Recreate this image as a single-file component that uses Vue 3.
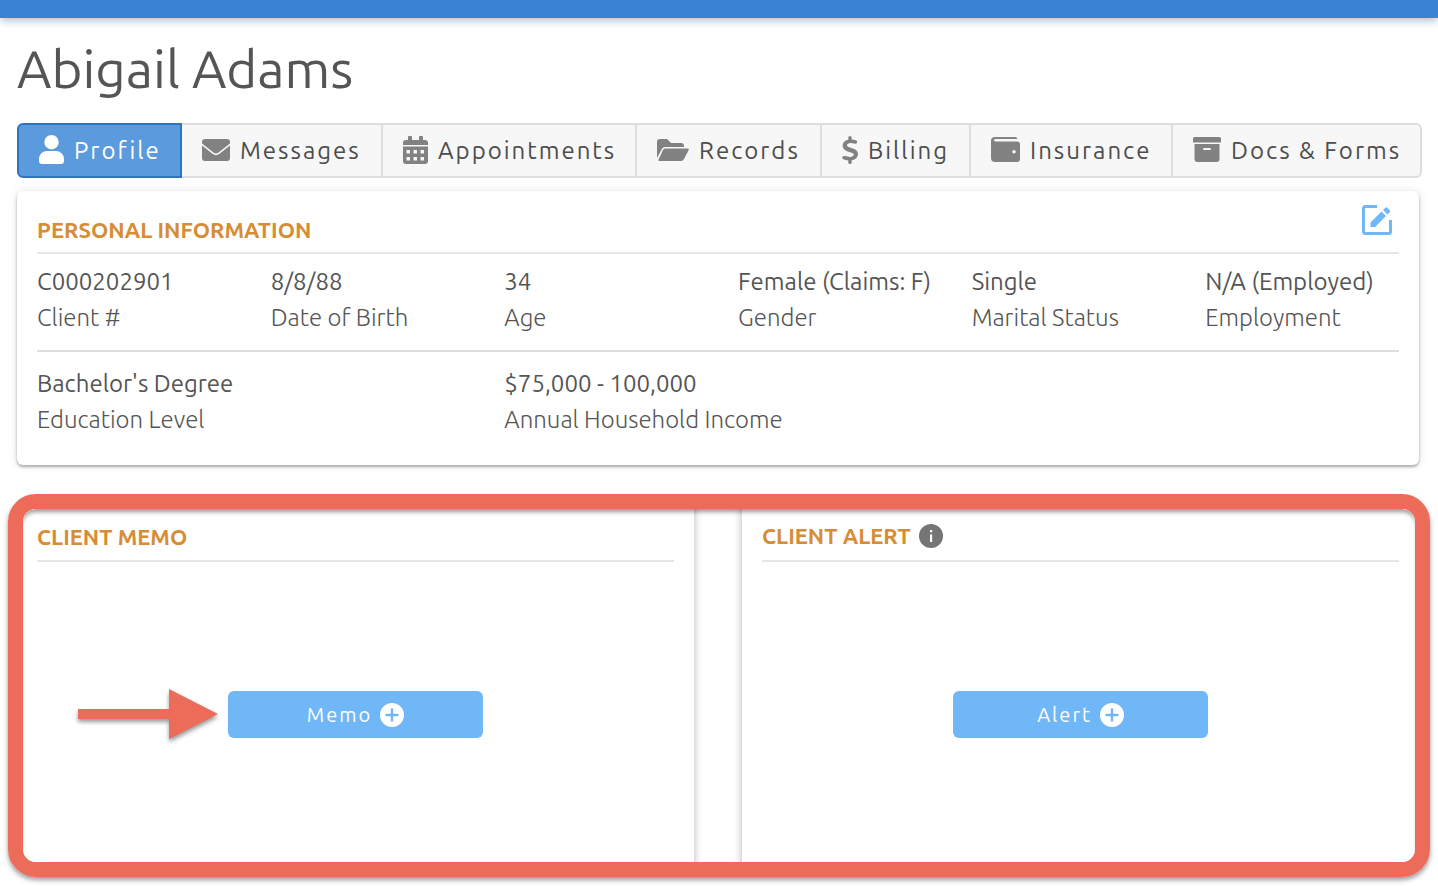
<template>
  <div class="page">
    <header class="topbar"></header>
    <main>
      <h1>{{ client }}</h1>

      <nav class="tabs">
        <button
          v-for="tab in tabs"
          :key="tab.name"
          type="button"
          class="tab"
          :class="{ active: tab.name === current }"
          @click="current = tab.name"
        >
          <svg :width="tab.w" :height="tab.h" :viewBox="`0 0 ${tab.w} ${tab.h}`" aria-hidden="true">
            <path :d="tab.path" fill="currentColor" fill-rule="evenodd" />
          </svg>
          <span>{{ tab.name }}</span>
        </button>
      </nav>

      <section class="card">
        <div class="card-head">
          <h2>Personal Information</h2>
          <button type="button" class="edit" aria-label="Edit personal information">
            <svg width="32" height="32" viewBox="0 0 32 32">
              <path d="M16 2.500H4.500Q2.500 2.500 2.500 4.500V27.500Q2.500 29.500 4.500 29.500H27.500Q29.500 29.500 29.500 27.500V16" fill="none" stroke="currentColor" stroke-width="3" />
              <path d="M9.500 23V18.500L20.500 7.500L25 12L14 23ZM22 6L24.300 3.700Q25.300 2.800 26.300 3.700L28.800 6.200Q29.700 7.200 28.800 8.200L26.500 10.500Z" fill="currentColor" />
            </svg>
          </button>
        </div>
        <dl class="info">
          <div v-for="item in personal" :key="item.label">
            <dt>{{ item.label }}</dt>
            <dd>{{ item.value }}</dd>
          </div>
        </dl>
        <dl class="info wide">
          <div v-for="item in background" :key="item.label">
            <dt>{{ item.label }}</dt>
            <dd>{{ item.value }}</dd>
          </div>
        </dl>
      </section>
    </main>

    <div class="highlight">
      <section class="panel memo">
        <h2>Client Memo</h2>
        <div class="panel-body">
          <div class="action">
            <svg class="arrow" width="140" height="50" viewBox="0 0 140 50" aria-hidden="true">
              <path d="M0 20H91V0L140 25L91 50V30H0Z" fill="#ec6b59" />
            </svg>
            <button type="button" class="add">
              Memo
              <svg width="24" height="24" viewBox="0 0 24 24" aria-hidden="true">
                <circle cx="12" cy="12" r="12" fill="#fff" />
                <path d="M12 6.500V17.500M6.500 12H17.500" stroke="#6fb7f7" stroke-width="2.400" stroke-linecap="round" />
              </svg>
            </button>
          </div>
        </div>
      </section>
      <section class="panel alert">
        <h2>
          Client Alert
          <svg width="24" height="24" viewBox="0 0 24 24" aria-hidden="true">
            <circle cx="12" cy="12" r="12" fill="#757575" />
            <path d="M11 6H13.200V8.300H11ZM11 10.500H13.200V18H11Z" fill="#fff" />
          </svg>
        </h2>
        <div class="panel-body">
          <div class="action">
            <button type="button" class="add">
              Alert
              <svg width="24" height="24" viewBox="0 0 24 24" aria-hidden="true">
                <circle cx="12" cy="12" r="12" fill="#fff" />
                <path d="M12 6.500V17.500M6.500 12H17.500" stroke="#6fb7f7" stroke-width="2.400" stroke-linecap="round" />
              </svg>
            </button>
          </div>
        </div>
      </section>
    </div>
  </div>
</template>

<script setup>
import { ref } from 'vue'

const client = 'Abigail Adams'
const current = ref('Profile')

const tabs = [
  {
    name: 'Profile', w: 25, h: 29,
    path: 'M12.500 0A7.200 7.200 0 1 1 12.500 14.400A7.200 7.200 0 1 1 12.500 0ZM8 16H17A8 8 0 0 1 25 24V26Q25 29 22 29H3Q0 29 0 26V24A8 8 0 0 1 8 16Z'
  },
  {
    name: 'Messages', w: 28, h: 22,
    path: 'M3 0H25Q28 0 28 3V4.500L16.500 13.500Q14 15.500 11.500 13.500L0 4.500V3Q0 0 3 0ZM0 6.500L10.500 14.800Q14 17.500 17.500 14.800L28 6.500V19Q28 22 25 22H3Q0 22 0 19Z'
  },
  {
    name: 'Appointments', w: 25, h: 28,
    path: 'M3 4H5V1Q5 0 6 0H8Q9 0 9 1V4H16V1Q16 0 17 0H19Q20 0 20 1V4H22Q25 4 25 7V9H0V7Q0 4 3 4ZM0 10.500H25V25Q25 28 22 28H3Q0 28 0 25ZM3.500 14V17.500H7V14ZM10.500 14V17.500H14V14ZM17.500 14V17.500H21V14ZM3.500 21V24.500H7V21ZM10.500 21V24.500H14V21ZM17.500 21V24.500H21V21Z'
  },
  {
    name: 'Records', w: 32, h: 22,
    path: 'M0 19V3Q0 0 3 0H10L14 4H24Q27 4 27 7V8H8Q6 8 5 9.700ZM8.200 9.500H30.500Q32.500 9.500 31.600 11.200L27 20Q26 22 24 22H2.500Q0.800 22 1.600 20.400L6 11Q6.700 9.500 8.200 9.500Z'
  },
  {
    name: 'Billing', w: 16, h: 28,
    path: 'M6.300 1.500Q6.300 0 8 0Q9.700 0 9.700 1.500V3.400Q12 3.600 14 4.300Q15.600 5 15.100 6.600Q14.500 8.200 12.800 7.700Q8.500 6.500 6.300 7.600Q4.500 8.600 5.200 10Q5.900 11 9.500 11.900Q15.900 13.500 16 18Q16 23 9.700 24.300V26.500Q9.700 28 8 28Q6.300 28 6.300 26.500V24.400Q3.600 24.100 1.300 23.200Q-0.200 22.500 0.500 20.900Q1.200 19.500 2.800 20.100Q7.500 21.600 10.200 20.400Q12.400 19.400 11.700 17.900Q11.100 16.800 7.400 15.900Q0.700 14.300 0.600 9.700Q0.700 4.900 6.300 3.700Z'
  },
  {
    name: 'Insurance', w: 29, h: 25,
    path: 'M4 0H24Q26 0 26.500 2H5Q3 2 3 3.200Q3 4.500 5 4.500H26Q29 4.500 29 7.500V22Q29 25 26 25H4Q0 25 0 21V4Q0 0 4 0ZM23 13A1.800 1.800 0 1 0 23 16.600A1.800 1.800 0 1 0 23 13Z'
  },
  {
    name: 'Docs & Forms', w: 28, h: 25,
    path: 'M1.500 0H26.500Q28 0 28 1.500V5.500H0V1.500Q0 0 1.500 0ZM1.500 7H26.500V22Q26.500 25 23.500 25H4.500Q1.500 25 1.500 22ZM11 11Q10 11 10 12Q10 13 11 13H17Q18 13 18 12Q18 11 17 11Z'
  }
]

const personal = [
  { label: 'Client #', value: 'C000202901' },
  { label: 'Date of Birth', value: '8/8/88' },
  { label: 'Age', value: '34' },
  { label: 'Gender', value: 'Female (Claims: F)' },
  { label: 'Marital Status', value: 'Single' },
  { label: 'Employment', value: 'N/A (Employed)' }
]

const background = [
  { label: 'Education Level', value: "Bachelor's Degree" },
  { label: 'Annual Household Income', value: '$75,000 - 100,000' }
]
</script>

<style>
body {
  margin: 0;
  background: #fff;
}
</style>

<style scoped>
.page {
  font-family: Ubuntu, "Open Sans", "Noto Sans", sans-serif;
  color: #555;
}
.page * {
  box-sizing: border-box;
}
.topbar {
  height: 18px;
  background: #3883d4;
  box-shadow: 0 2px 10px rgba(0, 0, 0, 0.3);
}
main {
  padding: 21px 16px 0 17px;
}
h1 {
  margin: 0;
  font-size: 53px;
  font-weight: 400;
  line-height: 60px;
}
button {
  font-family: inherit;
  cursor: pointer;
}

.tabs {
  display: grid;
  grid-template-columns: 165fr 201fr 254fr 185fr 149fr 202fr 249fr;
  margin-top: 24px;
}
.tab {
  display: flex;
  align-items: center;
  gap: 10px;
  height: 55px;
  padding: 0 0 0 20px;
  border: solid #dedede;
  border-width: 2px 2px 2px 0;
  background: #f7f7f7;
  color: #828282;
  font-size: 24px;
  letter-spacing: 2px;
  white-space: nowrap;
}
.tab svg {
  flex: none;
  margin-bottom: 2px;
}
.tab span {
  color: #4d4d4d;
}
.tab:first-child {
  border-left-width: 2px;
  border-radius: 6px 0 0 6px;
}
.tab:last-child {
  border-radius: 0 6px 6px 0;
}
.tab.active {
  border-color: #2f75bd;
  background: #5b9add;
  color: #fff;
}
.tab.active span {
  color: #fff;
}

.card {
  margin: 13px 3px 0 0;
  padding: 13px 20px 27px;
  border-radius: 6px;
  background: #fff;
  box-shadow: 0 2px 3px rgba(0, 0, 0, 0.3), 0 0 10px rgba(0, 0, 0, 0.1);
}
.card-head {
  display: flex;
  align-items: flex-start;
  justify-content: space-between;
  height: 50px;
  border-bottom: 2px solid #e6e6e6;
}
h2 {
  margin: 0;
  color: #d68d35;
  font-size: 22px;
  font-weight: 700;
  line-height: 30px;
  text-transform: uppercase;
}
.card-head h2 {
  padding-top: 11px;
}
.edit {
  margin-right: 6px;
  padding: 0;
  border: 0;
  background: none;
  color: #6fb7f7;
}
.edit svg {
  display: block;
}
.info {
  display: grid;
  grid-template-columns: repeat(6, minmax(0, 1fr));
  column-gap: 40px;
  margin: 0;
  padding: 10px 0 14px;
  font-size: 24px;
  line-height: 36px;
  white-space: nowrap;
}
.info.wide {
  padding: 14px 0 0;
  border-top: 2px solid #dedede;
}
.info.wide > div {
  grid-column: span 2;
}
.info > div {
  display: flex;
  flex-direction: column-reverse;
}
dt {
  font-weight: 300;
}
dd {
  margin: 0;
}

.highlight {
  display: grid;
  grid-template-columns: 671fr 673fr;
  column-gap: 48px;
  position: relative;
  margin: 29px 8px 9px;
  border: 15px solid #ec6b59;
  border-radius: 28px;
  overflow: hidden;
  box-shadow: 0 3px 5px rgba(0, 0, 0, 0.4);
}
/* shadow the frame casts on the panels */
.highlight::after {
  content: '';
  position: absolute;
  inset: 0;
  border-radius: 13px;
  box-shadow: inset 0 5px 4px -2px rgba(0, 0, 0, 0.4);
  pointer-events: none;
}
.panel {
  margin: -10px 0;
  padding: 22px 20px 10px 14px;
  background: #fff;
  box-shadow: 0 0 8px rgba(0, 0, 0, 0.3);
}
.panel.alert {
  padding: 22px 16px 10px 20px;
}
.panel h2 {
  display: flex;
  align-items: center;
  gap: 8px;
  height: 41px;
  padding-bottom: 8px;
  border-bottom: 2px solid #e6e6e6;
}
.panel.alert h2 {
  padding-bottom: 10px;
}
.panel-body {
  display: flex;
  justify-content: center;
  padding: 129px 0 124px;
}
.action {
  position: relative;
  width: 40%;
}
.arrow {
  position: absolute;
  top: -2px;
  right: 100%;
  margin-right: 10px;
  overflow: visible;
  filter: drop-shadow(0 3px 2px rgba(0, 0, 0, 0.4));
}
.add {
  display: flex;
  align-items: center;
  justify-content: center;
  gap: 8px;
  width: 100%;
  height: 47px;
  padding: 0;
  border: 0;
  border-radius: 6px;
  background: #6fb7f7;
  color: #fff;
  font-size: 20px;
  letter-spacing: 2px;
}
</style>
